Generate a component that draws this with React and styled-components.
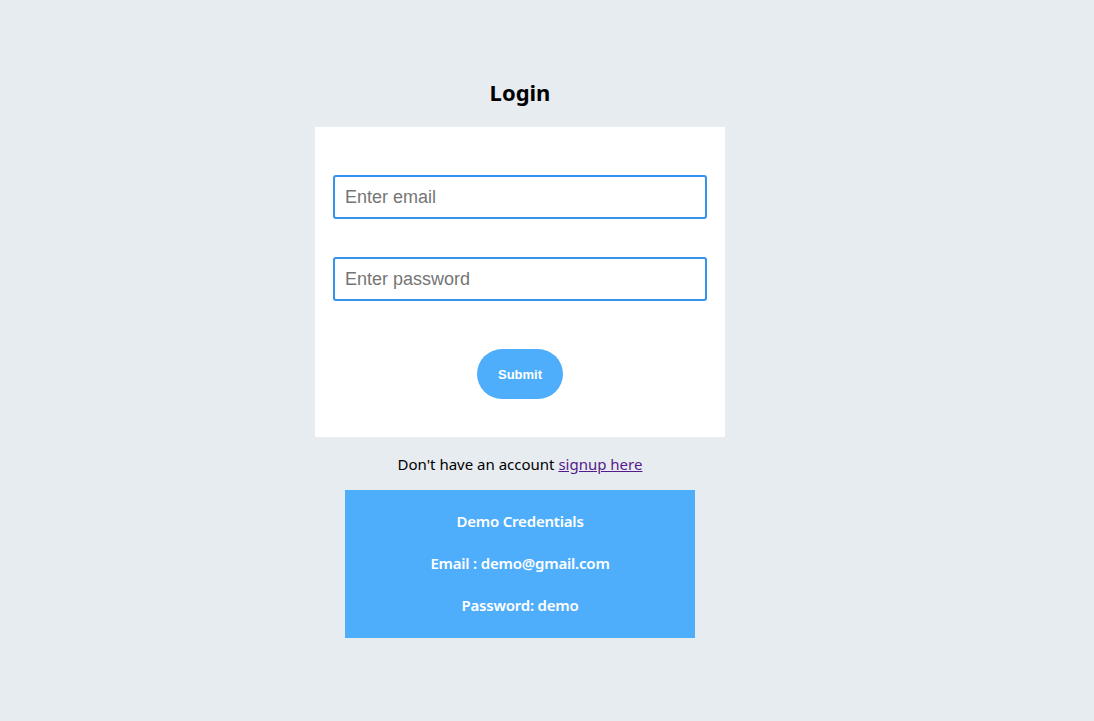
import React, { useState } from 'react'
import styled, { createGlobalStyle } from 'styled-components'

const GlobalStyle = createGlobalStyle`
  html, body {
    margin: 0;
    padding: 0;
    background: #e7ecf0;
    font-family: "Noto Sans", "Open Sans", sans-serif;
  }
`

const Page = styled.div`
  min-height: 721px;
  display: flex;
  flex-direction: column;
  align-items: center;
  padding: 76px 54px 0 0;
  box-sizing: border-box;
`

const Title = styled.h2`
  margin: 0 0 19px;
  height: 32px;
  line-height: 32px;
  font-size: 22px;
  font-weight: 700;
  color: #000;
`

const Card = styled.form`
  width: 410px;
  box-sizing: border-box;
  background: #fff;
  padding: 48px 18px 38px;
  display: flex;
  flex-direction: column;
  align-items: center;
`

const Input = styled.input`
  width: 100%;
  height: 44px;
  box-sizing: border-box;
  border: 2px solid #3393ef;
  border-radius: 3px;
  padding: 0 10px;
  font-family: "Liberation Sans", Arial, sans-serif;
  font-size: 18px;
  color: #333;
  outline: none;
  margin-bottom: ${({ gap }) => gap}px;

  &::placeholder {
    color: #757575;
  }
`

const SubmitButton = styled.button`
  width: 86px;
  height: 50px;
  border: none;
  border-radius: 25px;
  background: #4faefb;
  color: #fff;
  font-family: "Liberation Sans", Arial, sans-serif;
  font-size: 13px;
  font-weight: 700;
  cursor: pointer;
`

const SignupText = styled.p`
  margin: 16px 0 15px;
  line-height: 22px;
  font-size: 15px;
  color: #000;

  a {
    color: #551a8b;
  }
`

const DemoBox = styled.div`
  width: 350px;
  background: #4faefb;
  color: #fff;
  display: flex;
  flex-direction: column;
  align-items: center;
  padding: 21px 0 22px;
  gap: 21px;
`

const DemoLine = styled.h4`
  margin: 0;
  line-height: 21px;
  font-size: 15px;
  font-weight: 600;
  letter-spacing: -0.2px;
`

function App() {
  const [email, setEmail] = useState('')
  const [password, setPassword] = useState('')

  return (
    <>
      <GlobalStyle />
      <Page>
        <Title>Login</Title>
        <Card onSubmit={e => e.preventDefault()}>
          <Input
            type="email"
            placeholder="Enter email"
            value={email}
            gap={38}
            onChange={e => setEmail(e.target.value)}
          />
          <Input
            type="password"
            placeholder="Enter password"
            value={password}
            gap={48}
            onChange={e => setPassword(e.target.value)}
          />
          <SubmitButton type="submit">Submit</SubmitButton>
        </Card>
        <SignupText>
          Don't have an account <a href="#signup">signup here</a>
        </SignupText>
        <DemoBox>
          <DemoLine>Demo Credentials</DemoLine>
          <DemoLine>Email : demo@gmail.com</DemoLine>
          <DemoLine>Password: demo</DemoLine>
        </DemoBox>
      </Page>
    </>
  )
}

export default App
